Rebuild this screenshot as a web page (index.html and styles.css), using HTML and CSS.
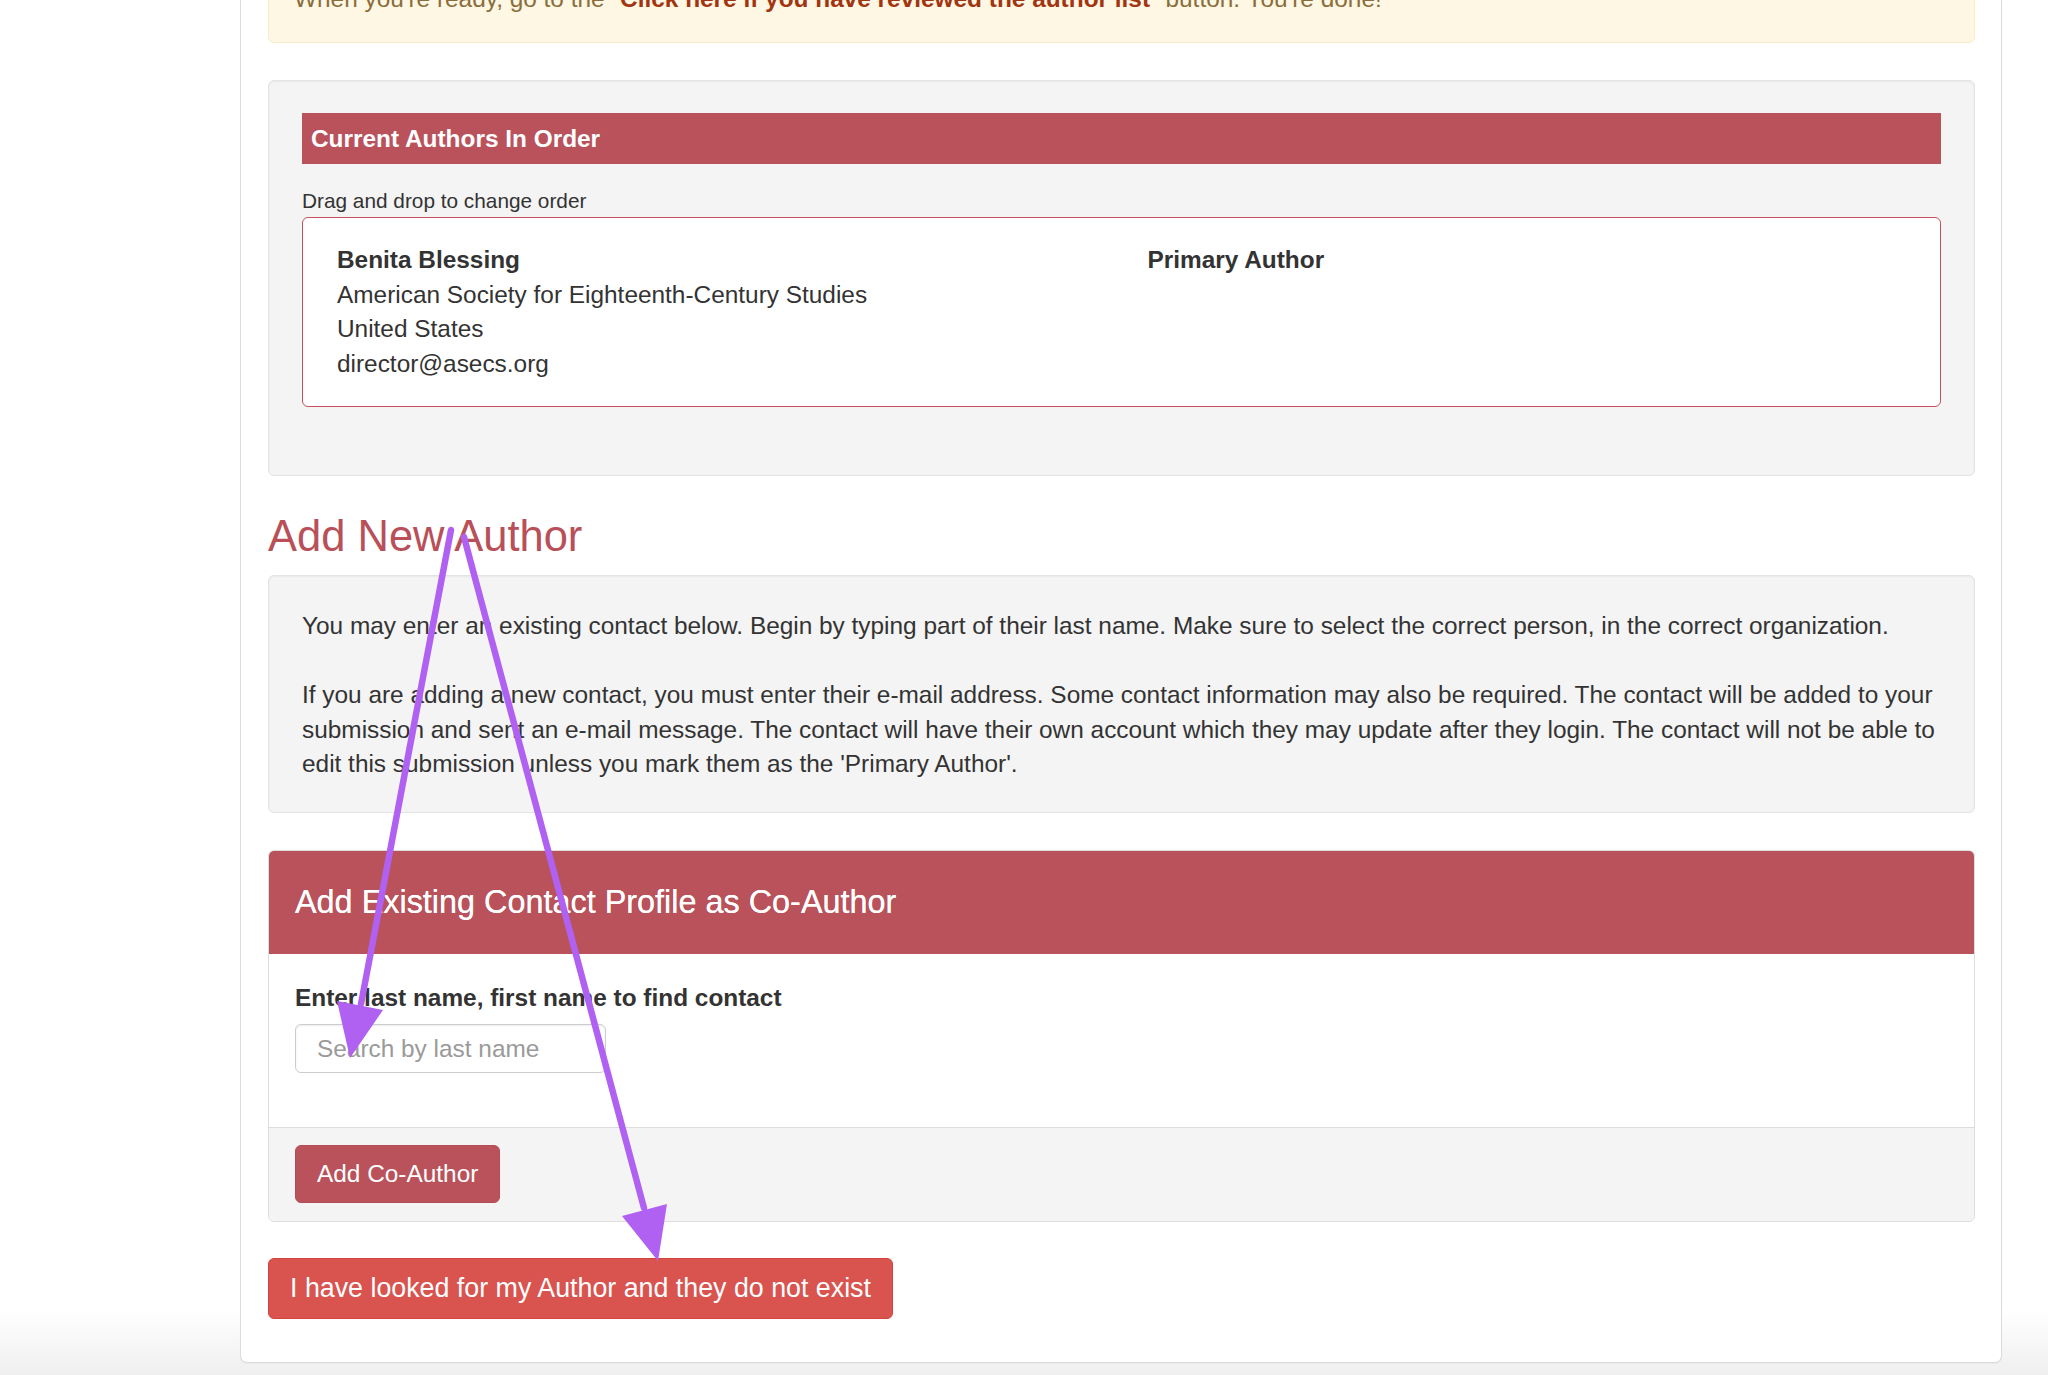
FILE: index.html
```html
<!DOCTYPE html>
<html lang="en">
<head>
<meta charset="utf-8">
<title>Authors</title>
<link rel="stylesheet" href="styles.css">
</head>
<body>
<div class="page">
  <aside class="side"></aside>
  <main class="main">
    <div class="alert">When you're ready, go to the "<strong>Click here if you have reviewed the author list</strong>" button. You're done!</div>

    <section class="well authors-well">
      <div class="bar">Current Authors In Order</div>
      <div class="hint">Drag and drop to change order</div>
      <div class="author-box">
        <div class="author-info">
          <strong>Benita Blessing</strong><br>
          American Society for Eighteenth-Century Studies<br>
          United States<br>
          director@asecs.org
        </div>
        <div class="author-role"><strong>Primary Author</strong></div>
      </div>
    </section>

    <h3 class="section-title">Add New Author</h3>

    <section class="well info-well">
      <p>You may enter an existing contact below. Begin by typing part of their last name. Make sure to select the correct person, in the correct organization.<br><br>If you are adding a new contact, you must enter their e-mail address. Some contact information may also be required. The contact will be added to your<br>submission and sent an e-mail message. The contact will have their own account which they may update after they login. The contact will not be able to<br>edit this submission unless you mark them as the 'Primary Author'.</p>
    </section>

    <section class="panel">
      <div class="panel-heading">Add Existing Contact Profile as Co-Author</div>
      <div class="panel-body">
        <label class="field-label" for="search">Enter last name, first name to find contact</label>
        <input id="search" class="field-input" type="text" placeholder="Search by last name">
      </div>
      <div class="panel-footer">
        <button class="btn btn-primary" type="button">Add Co-Author</button>
      </div>
    </section>

    <button class="btn btn-danger" type="button">I have looked for my Author and they do not exist</button>
  </main>

  <svg class="annot" width="2048" height="1375" viewBox="0 0 2048 1375" aria-hidden="true">
    <g stroke="#b061f1" stroke-width="6.5" stroke-linecap="round" fill="#b061f1">
      <line x1="451" y1="530" x2="361" y2="1004"/>
      <polygon stroke="none" points="350,1058 383,1010 337,1001"/>
      <line x1="464" y1="537" x2="644" y2="1208"/>
      <polygon stroke="none" points="658,1261 667,1204 622,1216"/>
    </g>
  </svg>
</div>
</body>
</html>
```

FILE: styles.css
```css
html {
  background: linear-gradient(to bottom, #ffffff 0, #ffffff 1310px, #efefef 1375px);
  min-height: 100%;
}

body {
  margin: 0;
  font-family: "Liberation Sans", Arial, Helvetica, sans-serif;
  font-size: 24.4px;
  line-height: 34.5px;
  color: #333333;
  overflow: hidden;
}

.page {
  position: relative;
  display: flex;
  align-items: flex-start;
  width: 2048px;
  height: 1375px;
  overflow: hidden;
}

.side {
  flex: 0 0 240px;
}

.main {
  flex: 0 0 1762px;
  box-sizing: border-box;
  background: #ffffff;
  border: 1px solid #dcdcdc;
  border-top: none;
  border-radius: 0 0 7px 7px;
  padding: 0 26px 43px 27px;
  display: flex;
  flex-direction: column;
  align-items: stretch;
  box-shadow: 0 1px 1px rgba(0, 0, 0, 0.04);
}

.alert {
  margin-top: -45.5px;
  margin-bottom: 37px;
  padding: 26px 25px 26px 25px;
  background: #fdf7e4;
  border: 1px solid #f8ebcd;
  border-radius: 6px;
  color: #8a6d3b;
}

.alert strong {
  color: #a23510;
  font-weight: bold;
}

.well {
  background: #f4f4f4;
  border: 1px solid #e3e3e3;
  border-radius: 6px;
  box-shadow: inset 0 1px 2px rgba(0, 0, 0, 0.05);
}

.authors-well {
  padding: 32px 33px;
}

.bar {
  background: #ba525b;
  color: #ffffff;
  font-weight: bold;
  height: 51px;
  line-height: 51px;
  padding: 0 9px;
}

.hint {
  font-size: 20.8px;
  line-height: 30px;
  margin-top: 22px;
  margin-bottom: 1px;
}

.author-box {
  background: #ffffff;
  border: 1px solid #c84f5c;
  border-radius: 6px;
  padding: 25px 34px;
  margin-bottom: 36px;
  display: grid;
  grid-template-columns: 1fr 1fr;
  column-gap: 52px;
}

.section-title {
  margin: 37px 0 16px 0;
  font-size: 43.5px;
  line-height: 46px;
  font-weight: normal;
  color: #b94f59;
}

.info-well {
  padding: 33px 33px 30px 33px;
  margin-bottom: 37px;
}

.info-well p {
  margin: 0;
}

.panel {
  border: 1px solid #dddddd;
  border-radius: 6px;
  background: #ffffff;
  overflow: hidden;
  margin-bottom: 36px;
}

.panel-heading {
  background: #ba525b;
  color: #ffffff;
  font-size: 32.4px;
  line-height: 45px;
  padding: 29px 26px;
  text-shadow: 0 0 0.4px #ffffff;
}

.panel-body {
  padding: 27px 26px 54px 26px;
  display: flex;
  flex-direction: column;
  align-items: flex-start;
}

.field-label {
  font-weight: bold;
  margin-bottom: 9px;
}

.field-input {
  box-sizing: border-box;
  width: 311px;
  height: 49px;
  padding: 0 21px;
  font-family: inherit;
  font-size: 24.4px;
  color: #555555;
  background: #ffffff;
  border: 1px solid #cccccc;
  border-radius: 6px;
  box-shadow: inset 0 1px 2px rgba(0, 0, 0, 0.08);
  outline: none;
}

.field-input::placeholder {
  color: #9a9a9a;
}

.panel-footer {
  background: #f4f4f4;
  border-top: 1px solid #dddddd;
  padding: 17px 26px 18px 26px;
}

.btn {
  box-sizing: border-box;
  font-family: inherit;
  color: #ffffff;
  border-radius: 6px;
  cursor: pointer;
  margin: 0;
}

.btn-primary {
  display: block;
  height: 58px;
  padding: 0 21px;
  font-size: 24.4px;
  background: #ba525b;
  border: 1px solid #b34c55;
}

.btn-danger {
  align-self: flex-start;
  height: 61px;
  padding: 0 21px;
  font-size: 26.8px;
  background: #d9534f;
  border: 1px solid #d3443f;
}

.annot {
  position: absolute;
  left: 0;
  top: 0;
  pointer-events: none;
}
```
